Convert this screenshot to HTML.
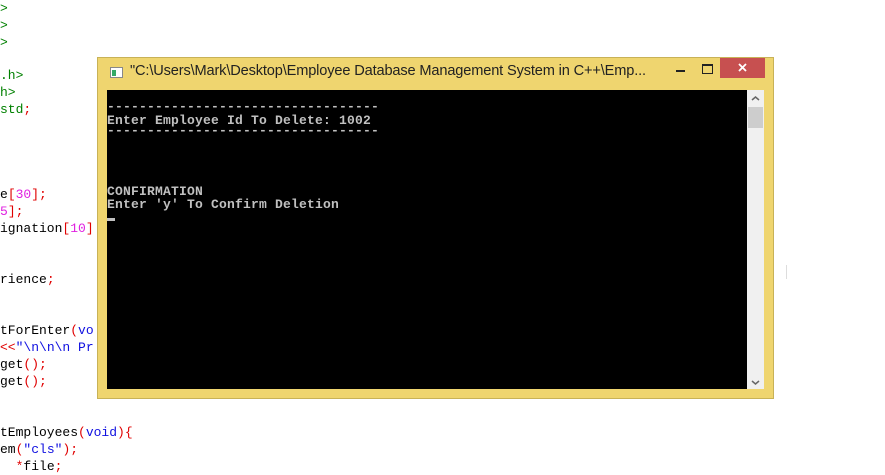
<!DOCTYPE html>
<html><head><style>
body{margin:0;width:885px;height:475px;background:#fff;position:relative;overflow:hidden;font-family:"Liberation Mono",monospace}
.c{position:absolute;left:0;font-size:13px;line-height:17px;white-space:pre;color:#000}
.g{color:#008000}.r{color:#e00000}.m{color:#e020e0}.b{color:#1010e0}
#win{position:absolute;left:97px;top:57px;width:677px;height:342px;background:#efd56f;border:1px solid #c8b257;box-sizing:border-box}
#con{position:absolute;left:107px;top:90px;width:640px;height:299px;background:#000}
#sb{position:absolute;left:747px;top:90px;width:17px;height:299px;background:#f0f0f0}
.t{position:absolute;left:107px;color:#c0c0c0;font-weight:bold;font-size:13px;letter-spacing:0.2px;white-space:pre;line-height:12px}
</style></head><body>
<div class="c g" style="top:0">&gt;</div>
<div class="c g" style="top:17px">&gt;</div>
<div class="c g" style="top:34px">&gt;</div>
<div class="c g" style="top:67px">.h&gt;</div>
<div class="c g" style="top:84px">h&gt;</div>
<div class="c" style="top:101px"><span class="g">std</span><span class="r">;</span></div>
<div class="c" style="top:186px">e<span class="r">[</span><span class="m">30</span><span class="r">];</span></div>
<div class="c" style="top:203px"><span class="m">5</span><span class="r">];</span></div>
<div class="c" style="top:220px">ignation<span class="r">[</span><span class="m">10</span><span class="r">]</span></div>
<div class="c" style="top:271px">rience<span class="r">;</span></div>
<div class="c" style="top:322px">tForEnter<span class="r">(</span><span class="b">vo</span></div>
<div class="c" style="top:339px"><span class="r">&lt;&lt;</span><span class="b">"\n\n\n Pr</span></div>
<div class="c" style="top:356px">get<span class="r">();</span></div>
<div class="c" style="top:373px">get<span class="r">();</span></div>
<div class="c" style="top:424px">tEmployees<span class="r">(</span><span class="b">void</span><span class="r">){</span></div>
<div class="c" style="top:441px">em<span class="r">(</span><span class="b">"cls"</span><span class="r">);</span></div>
<div class="c" style="top:458px">  <span class="r">*</span>file<span class="r">;</span></div>
<div style="position:absolute;left:786px;top:265px;width:1px;height:14px;background:#ddd"></div>
<div id="win"></div>
<div style="position:absolute;left:110px;top:67px;width:13px;height:11px;background:#fff;border:1px solid #888;box-sizing:border-box"><div style="position:absolute;left:1px;top:2px;width:4px;height:6px;background:#3a6"></div></div>
<div style="position:absolute;left:130px;top:63px;font-family:'Liberation Sans',sans-serif;font-size:14.6px;letter-spacing:-0.15px;color:#222;white-space:pre">"C:\Users\Mark\Desktop\Employee Database Management System in C++\Emp...</div>
<div style="position:absolute;left:676px;top:70px;width:9px;height:2px;background:#222"></div>
<div style="position:absolute;left:702px;top:64px;width:9px;height:7px;border:1px solid #222;border-top-width:2px"></div>
<div style="position:absolute;left:720px;top:58px;width:45px;height:20px;background:#c75050"><svg width="45" height="20"><path d="M19 6L26 13M26 6L19 13" stroke="#fff" stroke-width="1.8"/></svg></div>
<div id="con"></div>
<div id="sb"><div style="position:absolute;left:1px;top:17px;width:15px;height:21px;background:#cdcdcd"></div>
<svg style="position:absolute;left:0;top:0" width="17" height="299"><path d="M5 10L8.5 7L12 10M5 291L8.5 294L12 291" stroke="#666" stroke-width="1.5" fill="none"/></svg></div>
<div class="t" style="top:101px">----------------------------------</div>
<div class="t" style="top:115px">Enter Employee Id To Delete: 1002</div>
<div class="t" style="top:125px">----------------------------------</div>
<div class="t" style="top:186px">CONFIRMATION</div>
<div class="t" style="top:199px">Enter 'y' To Confirm Deletion</div>
<div style="position:absolute;left:107px;top:218px;width:8px;height:3px;background:#c0c0c0"></div>
</body></html>
